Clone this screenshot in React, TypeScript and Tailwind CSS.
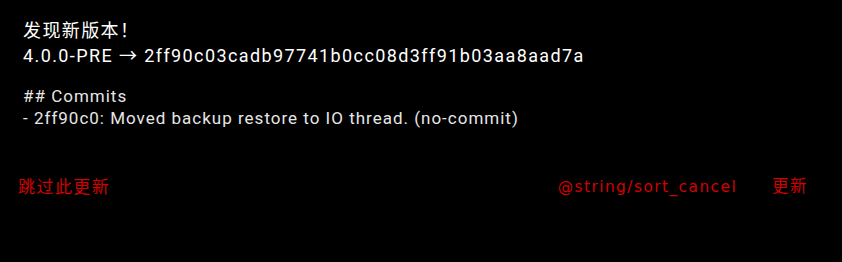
export default function App() {
  return (
    <div className="w-[842px] h-[262px] bg-black overflow-hidden">
      <div className="pl-[23px] pt-[18px] pr-6">
        <h1 className="text-[18px] leading-[25px] tracking-[1.4px] text-white font-['Roboto','Noto_Sans_CJK_SC',sans-serif]">
          发现新版本！
          <br />
          4.0.0-PRE → 2ff90c03cadb97741b0cc08d3ff91b03aa8aad7a
        </h1>
        <div className="mt-[17px] text-[17px] leading-[22px] tracking-[1px] text-[#e6e6e6] font-['Roboto','Noto_Sans_CJK_SC',sans-serif]">
          <p>## Commits</p>
          <p>- 2ff90c0: Moved backup restore to IO thread. (no-commit)</p>
        </div>
      </div>
      <div className="mt-[48px] flex items-center pl-[18px] text-[#d40000] tracking-[0.09em] font-['DejaVu_Sans','Noto_Sans_CJK_SC',sans-serif]">
        <button className="text-[17px] leading-[20px]">跳过此更新</button>
        <div className="flex-1" />
        <button className="text-[15.4px] leading-[20px]">@string/sort_cancel</button>
        <button className="ml-[35px] mr-[34px] text-[16.5px] leading-[20px]">更新</button>
      </div>
    </div>
  );
}
